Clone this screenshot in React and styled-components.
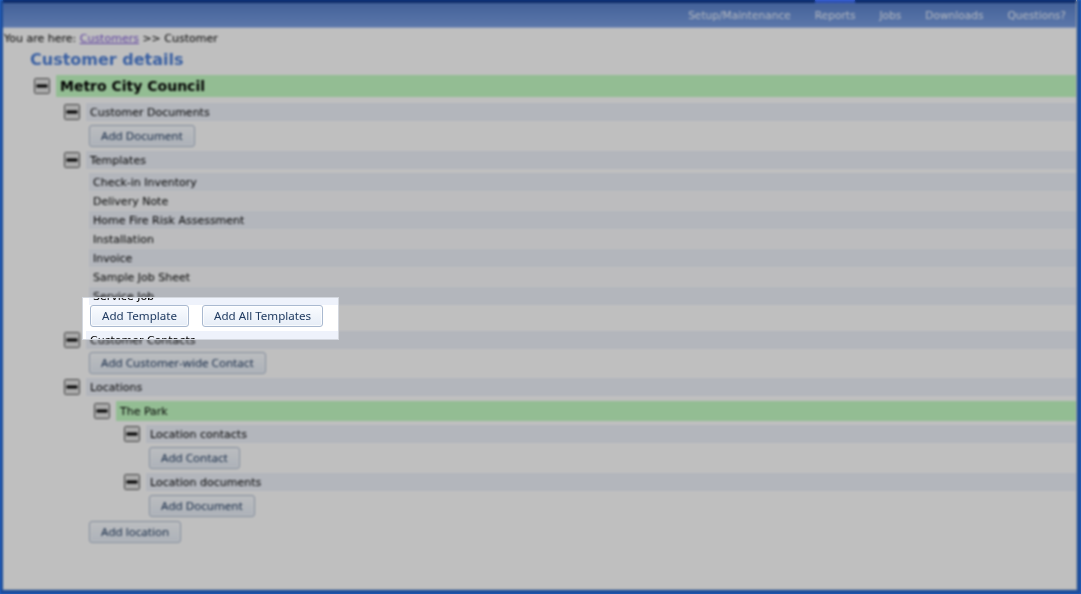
import React from 'react';
import styled, { createGlobalStyle } from 'styled-components';

const Global = createGlobalStyle`
  html, body { margin: 0; padding: 0; width: 1081px; height: 594px; overflow: hidden; background: #fff; }
  #root { width: 1081px; height: 594px; }
  * { box-sizing: border-box; }
`;

const Root = styled.div`
  position: relative;
  width: 1081px;
  height: 594px;
`;

const Frame = styled.div`
  width: 1081px;
  height: 594px;
  display: flex;
  flex-direction: column;
  border-left: 3px solid #2567d0;
  border-right: 4px solid #2567d0;
  border-bottom: 4px solid #2567d0;
  background: #fff;
  font-family: "DejaVu Sans", Tahoma, sans-serif;
  font-size: 11px;
  color: #000;
  overflow: hidden;
`;

const Inner = styled.div`
  flex: 1;
  display: flex;
  flex-direction: column;
  border-right: 1px solid #dedede;
  border-bottom: 1px solid #dedede;
  min-height: 0;
`;

const Header = styled.header`
  display: flex;
  justify-content: flex-end;
  align-items: stretch;
  gap: 24px;
  height: 28px;
  border-top: 3px solid #113a8c;
  border-bottom: 1px solid #acc4f6;
  background: linear-gradient(#5a82cc, #7a9fe3);
  padding-right: 10px;
`;

const NavItem = styled.a`
  display: flex;
  align-items: center;
  margin-top: -3px;
  border-top: 3px solid ${(p) => (p.$active ? '#3d6cf2' : 'transparent')};
  color: #eef4ff;
  font-size: 10.6px;
  text-decoration: none;
  white-space: nowrap;
`;

const Breadcrumb = styled.div`
  margin-top: 4px;
  padding-left: 1px;
  line-height: 14px;
  font-size: 11px;
`;

const Crumb = styled.a`
  color: #7852d2;
  text-decoration: underline;
`;

const Title = styled.h1`
  margin: 5px 0 0 27px;
  font-size: 16px;
  line-height: 18px;
  font-weight: bold;
  color: #4c7fd8;
`;

const Tree = styled.div`
  margin-top: 6px;
  padding-left: 31px;
  display: flex;
  flex-direction: column;
`;

const Node = styled.div`
  display: flex;
  flex-direction: column;
  align-self: stretch;
  margin-left: ${(p) => (p.$root ? 0 : 5)}px;
`;

const NodeHead = styled.div`
  display: flex;
  align-items: center;
  gap: 6px;
`;

const Label = styled.div`
  flex: 1;
  height: ${(p) => p.$h}px;
  display: flex;
  align-items: center;
  padding-left: 4px;
  background: ${(p) => (p.$green ? '#c4fcc4' : '#eef2fb')};
  font-size: ${(p) => (p.$big ? '14px' : '11px')};
  font-weight: ${(p) => (p.$big ? 'bold' : 'normal')};
  white-space: nowrap;
`;

const NodeBody = styled.div`
  display: flex;
  flex-direction: column;
  align-items: flex-start;
  gap: 4px;
  padding-left: 25px;
  margin-top: ${(p) => p.$gap}px;
`;

const ItemList = styled.div`
  align-self: stretch;
  display: flex;
  flex-direction: column;
  gap: 1px;
`;

const Item = styled.div`
  height: 18px;
  display: flex;
  align-items: center;
  padding-left: 4px;
  background: ${(p) => (p.$odd ? '#eef2fb' : '#fafbfd')};
  white-space: nowrap;
`;

const ButtonRow = styled.div`
  display: flex;
  gap: 13px;
  margin-left: 1px;
  margin-top: ${(p) => p.$shift || 0}px;
`;

const Button = styled.button`
  height: 22px;
  padding: 0 11px;
  border: 1px solid #a9b9d0;
  border-radius: 3px;
  background: linear-gradient(#fafcff, #e6edf7);
  box-shadow: inset 0 0 0 1px rgba(255, 255, 255, 0.75);
  font-family: "Noto Sans", "Open Sans", sans-serif;
  font-size: 11.6px;
  line-height: 18px;
  color: #1f3a60;
  white-space: nowrap;
  cursor: pointer;
`;

const Dim = styled.div`
  position: absolute;
  inset: 0;
  pointer-events: none;
  backdrop-filter: blur(1.1px) brightness(0.75);
  -webkit-backdrop-filter: blur(1.1px) brightness(0.75);
  clip-path: polygon(
    evenodd,
    0 0, 1081px 0, 1081px 594px, 0 594px, 0 0,
    82px 297px, 339px 297px, 339px 340px, 82px 340px, 82px 297px
  );
`;

const Spotlight = styled.div`
  position: absolute;
  left: 82px;
  top: 297px;
  width: 257px;
  height: 43px;
  border: 1px solid #d3d7de;
  pointer-events: none;
`;

const MinusBox = () => (
  <svg width="16" height="16" viewBox="0 0 16 16" style={{ flex: 'none' }}>
    <rect x="0.5" y="0.5" width="15" height="15" rx="1" fill="#e4e4e4" stroke="#555" />
    <rect x="2.5" y="6.5" width="11" height="3" fill="#000" />
  </svg>
);

const TreeNode = ({ label, green, big, h = 18, gap = 4, root, children }) => (
  <Node $root={root}>
    <NodeHead>
      <MinusBox />
      <Label $green={green} $big={big} $h={h}>{label}</Label>
    </NodeHead>
    {children && <NodeBody $gap={gap}>{children}</NodeBody>}
  </Node>
);

const templates = [
  'Check-in Inventory',
  'Delivery Note',
  'Home Fire Risk Assessment',
  'Installation',
  'Invoice',
  'Sample Job Sheet',
  'Service Job',
];

export default function App() {
  return (
    <Root>
      <Global />
      <Frame>
        <Inner>
          <Header>
            <NavItem>Setup/Maintenance</NavItem>
            <NavItem $active>Reports</NavItem>
            <NavItem>Jobs</NavItem>
            <NavItem>Downloads</NavItem>
            <NavItem>Questions?</NavItem>
          </Header>
          <Breadcrumb>
            You are here: <Crumb>Customers</Crumb> &gt;&gt; Customer
          </Breadcrumb>
          <Title>Customer details</Title>
          <Tree>
            <TreeNode root label="Metro City Council" green big h={22} gap={6}>
              <TreeNode label="Customer Documents">
                <Button>Add Document</Button>
              </TreeNode>
              <TreeNode label="Templates">
                <ItemList>
                  {templates.map((t, i) => (
                    <Item key={t} $odd={i % 2 === 0}>{t}</Item>
                  ))}
                </ItemList>
                <ButtonRow $shift={-4}>
                  <Button>Add Template</Button>
                  <Button>Add All Templates</Button>
                </ButtonRow>
              </TreeNode>
              <TreeNode label="Customer Contacts" gap={3}>
                <Button>Add Customer-wide Contact</Button>
              </TreeNode>
              <TreeNode label="Locations" gap={5}>
                <TreeNode label="The Park" green h={20} gap={4}>
                  <TreeNode label="Location contacts">
                    <Button>Add Contact</Button>
                  </TreeNode>
                  <TreeNode label="Location documents">
                    <Button>Add Document</Button>
                  </TreeNode>
                </TreeNode>
                <Button>Add location</Button>
              </TreeNode>
            </TreeNode>
          </Tree>
        </Inner>
      </Frame>
      <Dim />
      <Spotlight />
    </Root>
  );
}
